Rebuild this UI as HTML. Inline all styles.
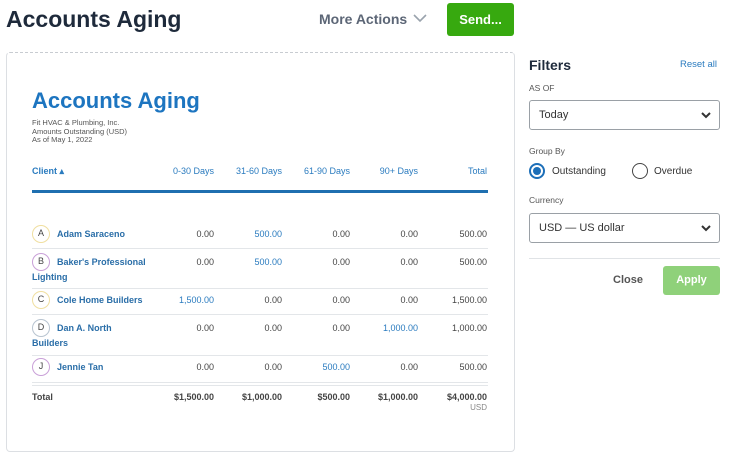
<!DOCTYPE html>
<html><head><meta charset="utf-8"><style>
*{margin:0;padding:0;box-sizing:border-box}
body{width:730px;height:429px;overflow:hidden;background:#fff;font-family:"Liberation Sans",sans-serif;position:relative;color:#333}
.a{position:absolute;white-space:nowrap}
.r{text-align:right}
.card{position:absolute;left:6px;top:52px;width:509px;height:400px;border:1px solid #dcdfe3;border-top:1px dashed #c8ccd1;border-radius:4px}
.h{font-size:9px;color:#2a7bbf}
.n{font-size:9px;color:#444}
.lk{color:#2a7bbf}
.nm{font-size:9px;font-weight:bold;color:#2a6ea8}
.av{position:absolute;width:18px;height:18px;border-radius:50%;border:1.5px solid;font-size:9px;text-align:center;line-height:15px;color:#444;background:#fff}
.sep{position:absolute;left:32px;width:456px;height:1px;background:#e3e6e9}
.sel{position:absolute;left:529px;width:191px;height:30px;border:1px solid #9aa0a6;border-radius:3px;font-size:11px;color:#333;padding:8px 9px}
.sel svg{position:absolute;right:8px;top:11px}
.lbl{font-size:8.5px;color:#555}
</style></head><body>
<div class="a" style="left:6px;top:6px;font-size:23px;font-weight:bold;color:#1e2a3b">Accounts Aging</div>
<div class="a" style="left:319px;top:11px;font-size:14px;font-weight:bold;color:#5c6676">More Actions</div>
<svg class="a" style="left:413px;top:14px" width="14" height="9" viewBox="0 0 14 9"><path d="M1 1l6 6 6-6" fill="none" stroke="#9aa3ad" stroke-width="1.6"/></svg>
<div class="a" style="left:447px;top:3px;width:67px;height:33px;background:#37a90f;border-radius:3px;color:#fff;font-size:13px;font-weight:bold;text-align:center;line-height:33px">Send...</div>

<div class="card"></div>
<div class="a" style="left:32px;top:88px;font-size:22px;font-weight:bold;color:#1d75c0">Accounts Aging</div>
<div class="a" style="left:32px;top:119px;font-size:7.5px;color:#555;line-height:8.5px">Fit HVAC &amp; Plumbing, Inc.<br>Amounts Outstanding (USD)<br>As of May 1, 2022</div>
<div class="a h" style="left:32px;top:166px;font-weight:bold">Client ▴</div>
<div class="a h r" style="left:154px;width:60px;top:166px">0-30 Days</div>
<div class="a h r" style="left:222px;width:60px;top:166px">31-60 Days</div>
<div class="a h r" style="left:290px;width:60px;top:166px">61-90 Days</div>
<div class="a h r" style="left:358px;width:60px;top:166px">90+ Days</div>
<div class="a h r" style="left:427px;width:60px;top:166px">Total</div>
<div class="a" style="left:32px;top:190px;width:456px;height:3px;background:#1f6fb0"></div>

<div class="av" style="left:32px;top:225px;border-color:#f0dfa0">A</div>
<div class="a nm" style="left:57px;top:229px">Adam Saraceno</div>
<div class="sep" style="top:248px"></div>
<div class="av" style="left:32px;top:253px;border-color:#c9a0d8">B</div>
<div class="a nm" style="left:57px;top:257px">Baker's Professional</div>
<div class="a nm" style="left:32px;top:272px">Lighting</div>
<div class="sep" style="top:288px"></div>
<div class="av" style="left:32px;top:291px;border-color:#f0dfa0">C</div>
<div class="a nm" style="left:57px;top:295px">Cole Home Builders</div>
<div class="sep" style="top:314px"></div>
<div class="av" style="left:32px;top:319px;border-color:#b8c4d0">D</div>
<div class="a nm" style="left:57px;top:323px">Dan A. North</div>
<div class="a nm" style="left:32px;top:338px">Builders</div>
<div class="sep" style="top:355px"></div>
<div class="av" style="left:32px;top:358px;border-color:#c9a0d8">J</div>
<div class="a nm" style="left:57px;top:362px">Jennie Tan</div>
<div class="sep" style="top:382px"></div>
<div class="sep" style="top:385px"></div>

<!-- numbers -->
<div class="a n r" style="left:154px;width:60px;top:229px">0.00</div>
<div class="a n r lk" style="left:222px;width:60px;top:229px">500.00</div>
<div class="a n r" style="left:290px;width:60px;top:229px">0.00</div>
<div class="a n r" style="left:358px;width:60px;top:229px">0.00</div>
<div class="a n r" style="left:427px;width:60px;top:229px">500.00</div>

<div class="a n r" style="left:154px;width:60px;top:257px">0.00</div>
<div class="a n r lk" style="left:222px;width:60px;top:257px">500.00</div>
<div class="a n r" style="left:290px;width:60px;top:257px">0.00</div>
<div class="a n r" style="left:358px;width:60px;top:257px">0.00</div>
<div class="a n r" style="left:427px;width:60px;top:257px">500.00</div>

<div class="a n r lk" style="left:154px;width:60px;top:295px">1,500.00</div>
<div class="a n r" style="left:222px;width:60px;top:295px">0.00</div>
<div class="a n r" style="left:290px;width:60px;top:295px">0.00</div>
<div class="a n r" style="left:358px;width:60px;top:295px">0.00</div>
<div class="a n r" style="left:427px;width:60px;top:295px">1,500.00</div>

<div class="a n r" style="left:154px;width:60px;top:323px">0.00</div>
<div class="a n r" style="left:222px;width:60px;top:323px">0.00</div>
<div class="a n r" style="left:290px;width:60px;top:323px">0.00</div>
<div class="a n r lk" style="left:358px;width:60px;top:323px">1,000.00</div>
<div class="a n r" style="left:427px;width:60px;top:323px">1,000.00</div>

<div class="a n r" style="left:154px;width:60px;top:362px">0.00</div>
<div class="a n r" style="left:222px;width:60px;top:362px">0.00</div>
<div class="a n r lk" style="left:290px;width:60px;top:362px">500.00</div>
<div class="a n r" style="left:358px;width:60px;top:362px">0.00</div>
<div class="a n r" style="left:427px;width:60px;top:362px">500.00</div>

<div class="a n" style="left:32px;top:392px;font-weight:bold">Total</div>
<div class="a n r" style="left:144px;width:70px;top:392px;font-weight:bold">$1,500.00</div>
<div class="a n r" style="left:212px;width:70px;top:392px;font-weight:bold">$1,000.00</div>
<div class="a n r" style="left:280px;width:70px;top:392px;font-weight:bold">$500.00</div>
<div class="a n r" style="left:348px;width:70px;top:392px;font-weight:bold">$1,000.00</div>
<div class="a n r" style="left:417px;width:70px;top:392px;font-weight:bold">$4,000.00</div>
<div class="a r" style="left:427px;width:60px;top:403px;font-size:8px;color:#888">USD</div>

<!-- filters -->
<div class="a" style="left:529px;top:57px;font-size:14px;font-weight:bold;color:#1e2a3b">Filters</div>
<div class="a" style="left:680px;top:59px;font-size:9.5px;color:#2a7bbf">Reset all</div>
<div class="a lbl" style="left:529px;top:83px">AS OF</div>
<div class="sel" style="top:100px">Today<svg width="10" height="7" viewBox="0 0 10 7"><path d="M1 1l4 4 4-4" fill="none" stroke="#333" stroke-width="2"/></svg></div>
<div class="a lbl" style="left:529px;top:146px">Group By</div>
<div class="a" style="left:529px;top:163px;width:16px;height:16px;border-radius:50%;border:2px solid #1d6fb8;padding:2px"><div style="width:8px;height:8px;border-radius:50%;background:#1d6fb8"></div></div>
<div class="a" style="left:552px;top:166px;font-size:10px;color:#333">Outstanding</div>
<div class="a" style="left:632px;top:163px;width:16px;height:16px;border-radius:50%;border:1.5px solid #444"></div>
<div class="a" style="left:654px;top:166px;font-size:10px;color:#333">Overdue</div>
<div class="a lbl" style="left:529px;top:195px">Currency</div>
<div class="sel" style="top:213px">USD — US dollar<svg width="10" height="7" viewBox="0 0 10 7"><path d="M1 1l4 4 4-4" fill="none" stroke="#333" stroke-width="2"/></svg></div>
<div class="a" style="left:529px;top:258px;width:191px;height:1px;background:#e0e3e6"></div>
<div class="a" style="left:613px;top:274px;font-size:11px;font-weight:bold;color:#555">Close</div>
<div class="a" style="left:663px;top:266px;width:57px;height:29px;background:#8fd17a;border-radius:3px;color:#fff;font-size:11px;font-weight:bold;text-align:center;line-height:29px">Apply</div>
</body></html>
